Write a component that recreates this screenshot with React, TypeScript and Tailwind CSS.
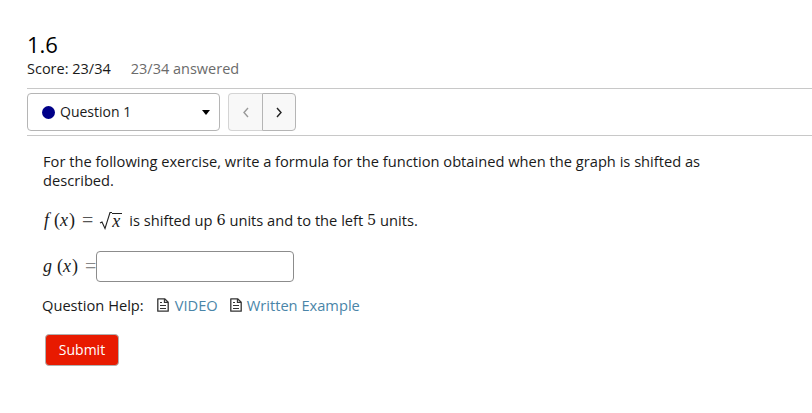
function Doc() {
    return (
        <svg width="12" height="14" viewBox="0 0 12 14" fill="none" stroke="#333" strokeWidth="1.3" className="shrink-0">
            <path d="M0.8 0.8h6.8l3.6 3.4v9H0.8z" strokeLinejoin="round" />
            <path d="M7.4 1v3.4h3.6M3 4.5h2M3 7.5h6M3 10.5h6" strokeWidth="1.1" />
        </svg>
    );
}

function M({ children, italic, className = '' }: { children: React.ReactNode; italic?: boolean; className?: string }) {
    return <span className={`font-['Liberation_Serif',serif] text-[18px] ${italic ? 'italic' : ''} ${className}`}>{children}</span>;
}

function Digit({ children }: { children: React.ReactNode }) {
    return <span className="font-['DejaVu_Serif',serif] text-[14.5px]">{children}</span>;
}

export default function App() {
    return (
        <div className="w-[812px] h-[413px] bg-white pt-[29px] pl-[27px] overflow-hidden font-['Open_Sans',sans-serif] text-[#1a1a1a]">
            <h1 className="text-[22px] leading-[30px] text-black">1.6</h1>
            <div className="flex gap-5 text-[14.5px] leading-[20px]">
                <span>Score: 23/34</span>
                <span className="text-[#6b6b6b]">23/34 answered</span>
            </div>

            <div className="mt-[9px] border-y border-[#c8c8c8] py-1 flex gap-2 h-[48px]">
                <div className="w-[193px] h-[38px] border border-[#b5b5b5] rounded-[4px] flex items-center pl-[14px] pr-[8px] text-[14px]">
                    <span className="w-[13px] h-[13px] rounded-full bg-[#000088] mr-[5px]" />
                    <span className="mt-[-2px]">Question 1</span>
                    <span className="ml-auto w-0 h-0 border-x-[4px] border-x-transparent border-t-[5px] border-t-black mr-[1px]" />
                </div>
                <div className="flex h-[38px]">
                    <div className="w-[34px] border border-[#d4d4d4] border-r-0 rounded-l-[4px] bg-[#f8f8f8] flex items-center justify-center">
                        <svg width="8" height="11" viewBox="0 0 8 11" fill="none" stroke="#999" strokeWidth="1.4"><path d="M6 1 2 5.5 6 10" /></svg>
                    </div>
                    <div className="w-[34px] border border-[#b5b5b5] rounded-r-[4px] bg-[#f8f8f8] flex items-center justify-center">
                        <svg width="8" height="11" viewBox="0 0 8 11" fill="none" stroke="#222" strokeWidth="1.4"><path d="M2 1 6 5.5 2 10" /></svg>
                    </div>
                </div>
            </div>

            <div className="pl-[16px] w-[720px] text-[14.67px]">
                <p className="mt-[16px] leading-[19px] w-[670px]">
                    For the following exercise, write a formula for the function obtained when the graph is shifted as described.
                </p>
                <p className="mt-[20px] leading-[20px] flex items-center whitespace-pre h-[20px]">
                    <M italic className="ml-[1px]">f</M><M className="ml-[5px]">(</M><M italic>x</M><M className="ml-[1px]">)</M><M className="ml-[7px] text-[#555] text-[20px]">=</M>
                    <svg width="13" height="19" viewBox="0 0 13 19" fill="none" stroke="#222" className="ml-[6px]"><path d="M1 12 3 11 6 17.5 11 1.5h2" strokeWidth="1.1" /></svg>
                    <span className="border-t border-[#222] leading-[15px] mt-[2px] w-[10px]"><M italic>x</M></span>
                    <span className="ml-[7px]">is shifted up </span><Digit>6</Digit><span> units and to the left </span><Digit>5</Digit><span> units.</span>
                </p>
                <div className="mt-[20px] flex items-center whitespace-pre h-[32px]">
                    <M italic>g</M><M className="ml-[5px]">(</M><M italic>x</M><M className="ml-[1px]">)</M><M className="ml-[7px] text-[#888] text-[20px]">=</M>
                    <div className="w-[198px] h-[31px] border border-[#8c8c8c] rounded-[4px]" />
                </div>
                <div className="mt-[9px] ml-[-1px] flex items-center h-[28px] leading-[20px]">
                    <span className="mr-[13px]">Question Help:</span>
                    <Doc />
                    <span className="text-[#4a85a8] ml-[6px] mr-[12px]">VIDEO</span>
                    <Doc />
                    <span className="text-[#4a85a8] ml-[5px]">Written Example</span>
                </div>
                <button className="mt-[15px] ml-[2px] w-[74px] h-[32px] bg-[#e81a00] border border-[#b0b0b0] rounded-[4px] text-white text-[14px] font-medium flex items-center justify-center pb-[2px]">
                    Submit
                </button>
            </div>
        </div>
    );
}
